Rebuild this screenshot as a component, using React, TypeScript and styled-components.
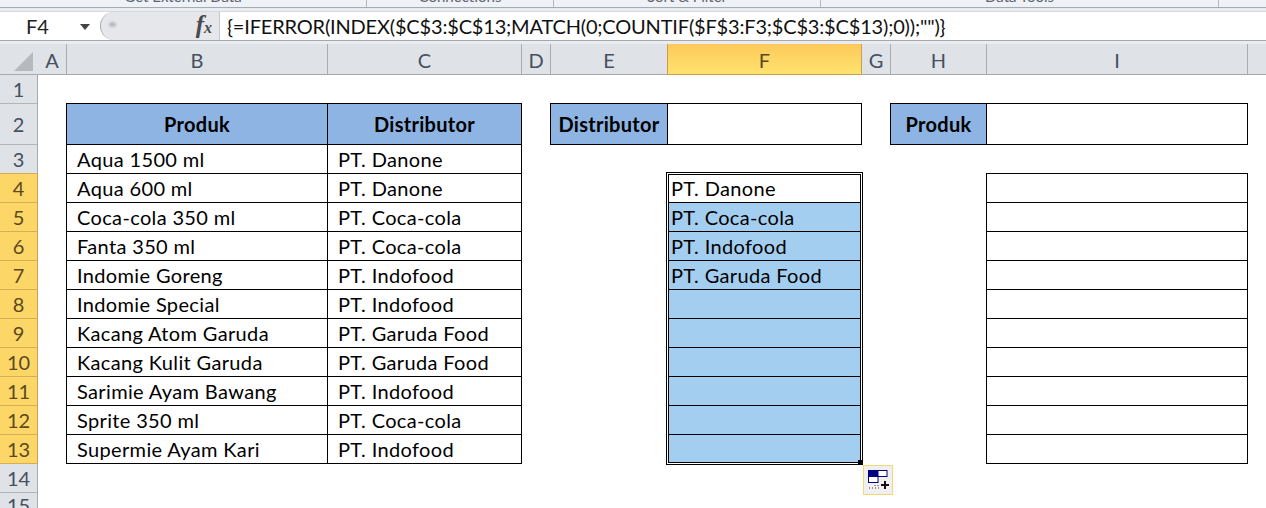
import React from 'react';
import styled, { createGlobalStyle, css } from 'styled-components';

const GlobalStyle = createGlobalStyle`
  html, body {
    margin: 0;
    padding: 0;
    background: #fff;
    overflow: hidden;
  }
  body {
    font-family: Lato, "Open Sans", sans-serif;
    color: #000;
  }
`;

const Window = styled.div`
  width: 1266px;
  height: 508px;
  overflow: hidden;
  background: #e9edf2;
`;

const Ribbon = styled.div`
  height: 7px;
  display: flex;
  overflow: hidden;
  background: #eef1f5;
  border-bottom: 1px solid #a7abb0;
`;

const RibbonGroup = styled.div<{ $width: number }>`
  width: ${(p) => p.$width}px;
  flex: none;
  box-sizing: border-box;
  height: 7px;
  border-right: 1px solid #b5b9be;
  text-align: center;
  font-size: 15px;
  line-height: 6px;
  color: #5d6470;
  & > span {
    display: block;
    margin-top: -7px;
  }
`;

const FormulaBar = styled.div`
  margin-top: 3px;
  height: 30px;
  display: flex;
  align-items: stretch;
  background: #fff;
  border-top: 1px solid #d5d8dc;
  box-sizing: border-box;
  border-bottom: 1px solid #a5a8ac;
`;

const NameBox = styled.div`
  width: 100px;
  flex: none;
  position: relative;
  font-size: 20px;
  line-height: 28px;
  padding-left: 26px;
  box-sizing: border-box;
  color: #222;
`;

const NameArrow = styled.i`
  position: absolute;
  left: 80px;
  top: 12px;
  border-left: 5px solid transparent;
  border-right: 5px solid transparent;
  border-top: 6px solid #444;
`;

const FxGroove = styled.div`
  width: 120px;
  flex: none;
  display: flex;
  align-items: center;
  justify-content: flex-end;
  padding-right: 7px;
  box-sizing: border-box;
  background: #e5e7ea;
  border-left: 1px solid #a9acb0;
  border-radius: 15px 0 0 15px;
  border-right: 1px solid #c6c9cd;
  position: relative;
  &::before {
    content: '';
    position: absolute;
    left: 8px;
    top: 10px;
    width: 7px;
    height: 5px;
    border-radius: 50%;
    background: #b4b7bb;
    filter: blur(1px);
  }
`;

const FxGlyph = styled.span`
  font-family: "Liberation Serif", serif;
  font-style: italic;
  font-weight: bold;
  font-size: 25px;
  line-height: 24px;
  color: #4a4a4a;
  & > small {
    font-size: 16px;
  }
`;

const FormulaInput = styled.div`
  flex: 1;
  padding-left: 7px;
  font-size: 20px;
  line-height: 28px;
  letter-spacing: -0.18px;
  white-space: nowrap;
  color: #111;
`;

const Sheet = styled.div`
  margin-top: 3px;
  display: grid;
  grid-template-columns: 37px 29px 261px 194px 29px 117px 194px 29px 96px 261px 19px;
  grid-template-rows: 30px 29px 41px repeat(12, 29px);
  background: #fff;
`;

const headerBase = css<{ $active?: boolean }>`
  display: flex;
  align-items: center;
  justify-content: center;
  font-size: 20px;
  box-sizing: border-box;
  color: ${(p) => (p.$active ? '#5b4a1e' : '#46505f')};
`;

const Corner = styled.div`
  background: #dfe2e7;
  margin: 0 -1px -1px 0;
  border-bottom: 1px solid #a5a8ad;
  box-sizing: border-box;
  position: relative;
  &::after {
    content: '';
    position: absolute;
    right: 5px;
    bottom: 3px;
    border-left: 19px solid transparent;
    border-bottom: 19px solid #b6babf;
  }
`;

// header lines lie on the same pixels as the table lines, so they run along the left/top
const ColHeader = styled.div<{ $active?: boolean; $edge?: boolean }>`
  ${headerBase}
  background: ${(p) => (p.$active ? 'linear-gradient(#fdc95a, #ffe36f)' : '#dfe2e7')};
  margin-bottom: -1px;
  border-left: 1px solid ${(p) => (p.$active || p.$edge ? '#c9a14e' : '#a9acb1')};
  border-bottom: 1px solid ${(p) => (p.$active ? '#c9a14e' : '#a5a8ad')};
  padding-top: 1px;
`;

const RowHeader = styled.div<{ $active?: boolean; $edge?: boolean }>`
  ${headerBase}
  background: ${(p) => (p.$active ? '#fdd668' : '#dfe2e7')};
  margin-right: -1px;
  border-right: 1px solid ${(p) => (p.$active ? '#c9a14e' : '#a5a8ad')};
  border-top: 1px solid ${(p) => (p.$active || p.$edge ? '#d8ae55' : '#b1b4b9')};
`;

const Cell = styled.div<{
  $boxed?: boolean;
  $head?: boolean;
  $fill?: boolean;
  $indent?: boolean;
}>`
  box-sizing: border-box;
  min-width: 0;
  display: flex;
  align-items: center;
  font-size: 20px;
  line-height: 27px;
  letter-spacing: 0.35px;
  white-space: nowrap;
  padding-left: ${(p) => (p.$indent ? 10 : 3)}px;
  ${(p) =>
    p.$boxed &&
    css`
      border: 1px solid #000;
      margin: 0 -1px -1px 0;
    `}
  ${(p) => p.$fill && 'background: #a4cef0;'}
  ${(p) =>
    p.$head &&
    css`
      background: #8db4e2;
      font-weight: bold;
      letter-spacing: 0.3px;
      justify-content: center;
      padding-left: 0;
    `}
`;

// F4:F13, the cells sit on the rows of the sheet and the double frame lies over them
const SelectionRange = styled.div`
  grid-column: 7;
  grid-row: 5 / span 10;
  display: grid;
  grid-template-rows: subgrid;
  position: relative;
  &::after {
    content: '';
    position: absolute;
    inset: -1px -2px -2px -1px;
    border: 1px solid #000;
    box-shadow: inset 0 0 0 1px #fff, inset 0 0 0 2px #000;
    pointer-events: none;
  }
`;

const SelectionHandle = styled.i`
  position: absolute;
  right: -2px;
  bottom: -2px;
  width: 5px;
  height: 5px;
  background: #000;
  z-index: 2;
`;

const AutoFillButton = styled.div`
  position: absolute;
  left: 196px;
  bottom: -32px;
  width: 30px;
  height: 30px;
  box-sizing: border-box;
  background: #f0f0f0;
  border: 1px solid #f3d774;
  z-index: 2;
`;

const columns = ['A', 'B', 'C', 'D', 'E', 'F', 'G', 'H', 'I', ''];

const products: [string, string][] = [
  ['Aqua 1500 ml', 'PT. Danone'],
  ['Aqua 600 ml', 'PT. Danone'],
  ['Coca-cola 350 ml', 'PT. Coca-cola'],
  ['Fanta 350 ml', 'PT. Coca-cola'],
  ['Indomie Goreng', 'PT. Indofood'],
  ['Indomie Special', 'PT. Indofood'],
  ['Kacang Atom Garuda', 'PT. Garuda Food'],
  ['Kacang Kulit Garuda', 'PT. Garuda Food'],
  ['Sarimie Ayam Bawang', 'PT. Indofood'],
  ['Sprite 350 ml', 'PT. Coca-cola'],
  ['Supermie Ayam Kari', 'PT. Indofood'],
];

const uniqueList = ['PT. Danone', 'PT. Coca-cola', 'PT. Indofood', 'PT. Garuda Food'];
const selectedRows = [4, 5, 6, 7, 8, 9, 10, 11, 12, 13];

const ribbonGroups = [
  { width: 367, label: 'Get External Data' },
  { width: 187, label: 'Connections' },
  { width: 267, label: 'Sort & Filter' },
  { width: 398, label: 'Data Tools' },
];

// one row of the worksheet, columns A..I plus the cut off column after I
const renderRow = (row: number) => {
  const cells: React.ReactNode[] = [];
  columns.forEach((col) => {
    const key = `${col}${row}`;
    if (row >= 4 && row <= 13 && col === 'F') return; // lives in SelectionRange
    if (row === 2 && col === 'B') cells.push(<Cell key={key} $boxed $head>Produk</Cell>);
    else if (row === 2 && col === 'C') cells.push(<Cell key={key} $boxed $head>Distributor</Cell>);
    else if (row === 2 && col === 'E') cells.push(<Cell key={key} $boxed $head>Distributor</Cell>);
    else if (row === 2 && col === 'F') cells.push(<Cell key={key} $boxed />);
    else if (row === 2 && col === 'H') cells.push(<Cell key={key} $boxed $head>Produk</Cell>);
    else if (row === 2 && col === 'I') cells.push(<Cell key={key} $boxed />);
    else if (row >= 3 && row <= 13 && col === 'B')
      cells.push(<Cell key={key} $boxed $indent>{products[row - 3][0]}</Cell>);
    else if (row >= 3 && row <= 13 && col === 'C')
      cells.push(<Cell key={key} $boxed $indent>{products[row - 3][1]}</Cell>);
    else if (row >= 4 && row <= 13 && col === 'I') cells.push(<Cell key={key} $boxed />);
    else cells.push(<Cell key={key} />);
  });
  return cells;
};

const rowNumbers = Array.from({ length: 15 }, (_, i) => i + 1);

export default function App() {
  return (
    <Window>
      <GlobalStyle />
      <Ribbon>
        {ribbonGroups.map((g) => (
          <RibbonGroup key={g.label} $width={g.width}>
            <span>{g.label}</span>
          </RibbonGroup>
        ))}
      </Ribbon>
      <FormulaBar>
        <NameBox>
          F4
          <NameArrow />
        </NameBox>
        <FxGroove>
          <FxGlyph>
            f<small>x</small>
          </FxGlyph>
        </FxGroove>
        <FormulaInput>
          {'{=IFERROR(INDEX($C$3:$C$13;MATCH(0;COUNTIF($F$3:F3;$C$3:$C$13);0));"")}'}
        </FormulaInput>
      </FormulaBar>
      <Sheet>
        <Corner />
        {columns.map((col, i) => (
          <ColHeader key={i} $active={col === 'F'} $edge={col === 'G'}>
            {col}
          </ColHeader>
        ))}
        {rowNumbers.map((row) => (
          <React.Fragment key={row}>
            <RowHeader $active={row >= 4 && row <= 13} $edge={row === 14}>
              {row}
            </RowHeader>
            {renderRow(row)}
          </React.Fragment>
        ))}
        <SelectionRange>
          {selectedRows.map((row) => (
            <Cell key={row} $boxed $fill={row > 4}>
              {uniqueList[row - 4]}
            </Cell>
          ))}
          <SelectionHandle />
          <AutoFillButton>
            <svg width="28" height="28" viewBox="0 0 28 28">
              <rect x="4.5" y="4.5" width="9.5" height="6" fill="#00007f" stroke="#00007f" />
              <rect x="14" y="4.5" width="9" height="6" fill="#fff" stroke="#00007f" />
              <rect x="4.5" y="10.5" width="9.5" height="6" fill="#fff" stroke="#00007f" />
              <path d="M5 22h1M8 22h1M11 22h1M14 22h1M11 19v1M14 19v1" stroke="#333" strokeWidth="1" />
              <path d="M17 19h8M21 15v8" stroke="#111" strokeWidth="2" />
            </svg>
          </AutoFillButton>
        </SelectionRange>
      </Sheet>
    </Window>
  );
}
